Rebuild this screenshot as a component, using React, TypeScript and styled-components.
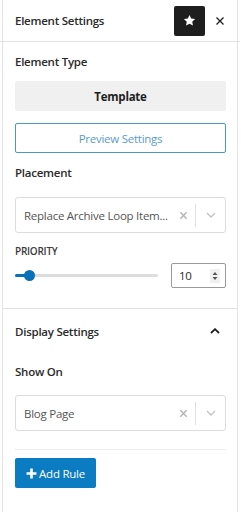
import { ReactElement } from 'react';
import styled, { createGlobalStyle } from 'styled-components';

const GlobalStyle = createGlobalStyle`
    html, body {
        margin: 0;
        padding: 0;
        background: #fff;
    }
    body {
        font-family: 'Open Sans', 'Liberation Sans', sans-serif;
        color: #1e1e1e;
        letter-spacing: -0.25px;
    }
`;

const Panel = styled.div`
    width: 236px;
    height: 512px;
    margin-left: 2px;
    border-left: 1px solid #e4e4e4;
    border-right: 1px solid #e4e4e4;
    background: #fff;
    box-sizing: border-box;
`;

const Header = styled.div`
    display: flex;
    align-items: center;
    height: 42px;
    margin-left: -3px;
    margin-right: -3px;
    padding: 0 14px 0 15px;
    border-bottom: 1px solid #e2e2e2;
    box-sizing: border-box;
`;

const HeaderTitle = styled.div`
    margin-right: auto;
    font-size: 11.5px;
    font-weight: 600;
    color: #2a2a2a;
`;

const StarButton = styled.div`
    width: 31px;
    height: 30px;
    background: #1e1e1e;
    border-radius: 2px;
    display: flex;
    align-items: center;
    justify-content: center;
`;

const CloseButton = styled.div`
    width: 12px;
    margin-left: 9px;
    display: flex;
    align-items: center;
    justify-content: center;
`;

const Section = styled.div`
    display: flex;
    flex-direction: column;
    padding: 0 11px 0 12px;
`;

const Label = styled.div<{ $top: number }>`
    margin-top: ${(p) => p.$top}px;
    font-size: 11.5px;
    line-height: 16px;
    font-weight: 600;
    color: #2a2a2a;
`;

const SmallLabel = styled.div`
    margin-top: 11px;
    font-size: 10px;
    line-height: 14px;
    font-weight: 600;
    color: #3a3a3a;
`;

const TypeBox = styled.div`
    margin-top: 11px;
    height: 30px;
    background: #f0f0f0;
    display: flex;
    align-items: center;
    justify-content: center;
    font-size: 11.5px;
    font-weight: 700;
    color: #1e1e1e;
    border-radius: 2px;
`;

const OutlineButton = styled.div`
    margin-top: 12px;
    height: 30px;
    border: 1px solid #4a97cc;
    border-radius: 2px;
    box-sizing: border-box;
    display: flex;
    align-items: center;
    justify-content: center;
    font-size: 11.5px;
    color: #5b9ccb;
`;

const Select = styled.div<{ $top: number }>`
    margin-top: ${(p) => p.$top}px;
    height: 36px;
    border: 1px solid #dcdcdc;
    border-radius: 3px;
    box-sizing: border-box;
    display: flex;
    align-items: center;
`;

const SelectValue = styled.div`
    flex: 1;
    padding-left: 8px;
    font-size: 11.5px;
    color: #555;
    white-space: nowrap;
    overflow: hidden;
`;

const ClearIcon = styled.div`
    width: 24px;
    display: flex;
    justify-content: center;
`;

const Separator = styled.div`
    width: 1px;
    height: 23px;
    background: #dedede;
`;

const ChevronIcon = styled.div`
    width: 29px;
    display: flex;
    justify-content: center;
`;

const SliderRow = styled.div`
    margin-top: 5px;
    display: flex;
    align-items: center;
    height: 25px;
`;

const Track = styled.div`
    position: relative;
    width: 143px;
    height: 3px;
    background: #dddddd;
    border-radius: 2px;
`;

const TrackFill = styled.div`
    position: absolute;
    left: 0;
    top: 0;
    height: 3px;
    background: #0a70b8;
    border-radius: 2px;
`;

const Thumb = styled.div`
    position: absolute;
    top: -4px;
    width: 11px;
    height: 11px;
    margin-left: -5px;
    border-radius: 50%;
    background: #0a70b8;
`;

const NumberInput = styled.div`
    margin-left: auto;
    width: 55px;
    height: 25px;
    border: 1px solid #9a9a9a;
    border-radius: 2px;
    box-sizing: border-box;
    display: flex;
    align-items: center;
    padding: 0 5px 0 7px;
    font-size: 11.5px;
    color: #2a2a2a;
`;

const Spinner = styled.div`
    margin-left: auto;
    width: 10px;
    height: 14px;
    background: #f0f0f0;
    display: flex;
    align-items: center;
    justify-content: center;
`;

const Divider = styled.div`
    margin-top: 20px;
    height: 1px;
    background: #e2e2e2;
`;

const SectionHeader = styled.div`
    display: flex;
    align-items: center;
    justify-content: space-between;
    height: 44px;
    padding-right: 6px;
    font-size: 11.5px;
    font-weight: 600;
    color: #2a2a2a;
`;

const InnerDivider = styled.div`
    margin-top: 18px;
    height: 1px;
    background: #eeeeee;
`;

const AddButton = styled.div`
    margin-top: 8px;
    align-self: flex-start;
    width: 81px;
    height: 30px;
    background: #0b7cc1;
    border-radius: 2px;
    display: flex;
    align-items: center;
    justify-content: center;
    gap: 2px;
    font-size: 11.5px;
    color: #fff;
`;

function Clear(): ReactElement {
    return (
        <svg width="9" height="9" viewBox="0 0 10 10">
            <path d="M1.5 1.5 L8.5 8.5 M8.5 1.5 L1.5 8.5" stroke="#b5b5b5" strokeWidth="1.6" />
        </svg>
    );
}

function Chevron(): ReactElement {
    return (
        <svg width="10" height="6" viewBox="0 0 10 6">
            <path d="M1 1 L5 5 L9 1" stroke="#c2c2c2" strokeWidth="1.3" fill="none" />
        </svg>
    );
}

function App(): ReactElement {
    return (
        <>
            <GlobalStyle />
            <Panel>
                <Header>
                    <HeaderTitle>Element Settings</HeaderTitle>
                    <StarButton>
                        <svg width="13" height="13" viewBox="0 0 24 24">
                            <path
                                d="M12 1.8l3.1 6.6 7.2.9-5.3 5 1.4 7.1L12 17.9l-6.4 3.5 1.4-7.1-5.3-5 7.2-.9z"
                                fill="#fff"
                            />
                        </svg>
                    </StarButton>
                    <CloseButton>
                        <svg width="10" height="10" viewBox="0 0 10 10">
                            <path d="M1.5 1.5 L8.5 8.5 M8.5 1.5 L1.5 8.5" stroke="#1e1e1e" strokeWidth="1.3" />
                        </svg>
                    </CloseButton>
                </Header>
                <Section>
                    <Label $top={12}>Element Type</Label>
                    <TypeBox>Template</TypeBox>
                    <OutlineButton>Preview Settings</OutlineButton>
                    <Label $top={12}>Placement</Label>
                    <Select $top={16}>
                        <SelectValue>Replace Archive Loop Item...</SelectValue>
                        <ClearIcon>
                            <Clear />
                        </ClearIcon>
                        <Separator />
                        <ChevronIcon>
                            <Chevron />
                        </ChevronIcon>
                    </Select>
                    <SmallLabel>PRIORITY</SmallLabel>
                    <SliderRow>
                        <Track>
                            <TrackFill style={{ width: '14px' }} />
                            <Thumb style={{ left: '14px' }} />
                        </Track>
                        <NumberInput>
                            10
                            <Spinner>
                                <svg width="6" height="10" viewBox="0 0 6 10">
                                    <path d="M0.5 4 L3 1 L5.5 4 Z M0.5 6 L3 9 L5.5 6 Z" fill="#555" />
                                </svg>
                            </Spinner>
                        </NumberInput>
                    </SliderRow>
                </Section>
                <Divider />
                <Section>
                    <SectionHeader>
                        Display Settings
                        <svg width="10" height="6" viewBox="0 0 10 6">
                            <path d="M1 5 L5 1.2 L9 5" stroke="#1e1e1e" strokeWidth="1.8" fill="none" />
                        </svg>
                    </SectionHeader>
                    <Label $top={11}>Show On</Label>
                    <Select $top={15}>
                        <SelectValue>Blog Page</SelectValue>
                        <ClearIcon>
                            <Clear />
                        </ClearIcon>
                        <Separator />
                        <ChevronIcon>
                            <Chevron />
                        </ChevronIcon>
                    </Select>
                    <InnerDivider />
                    <AddButton>
                        <svg width="11" height="11" viewBox="0 0 10 10">
                            <path d="M5 0.5 V9.5 M0.5 5 H9.5" stroke="#fff" strokeWidth="2.4" />
                        </svg>
                        Add Rule
                    </AddButton>
                </Section>
            </Panel>
        </>
    );
}

export default App;
